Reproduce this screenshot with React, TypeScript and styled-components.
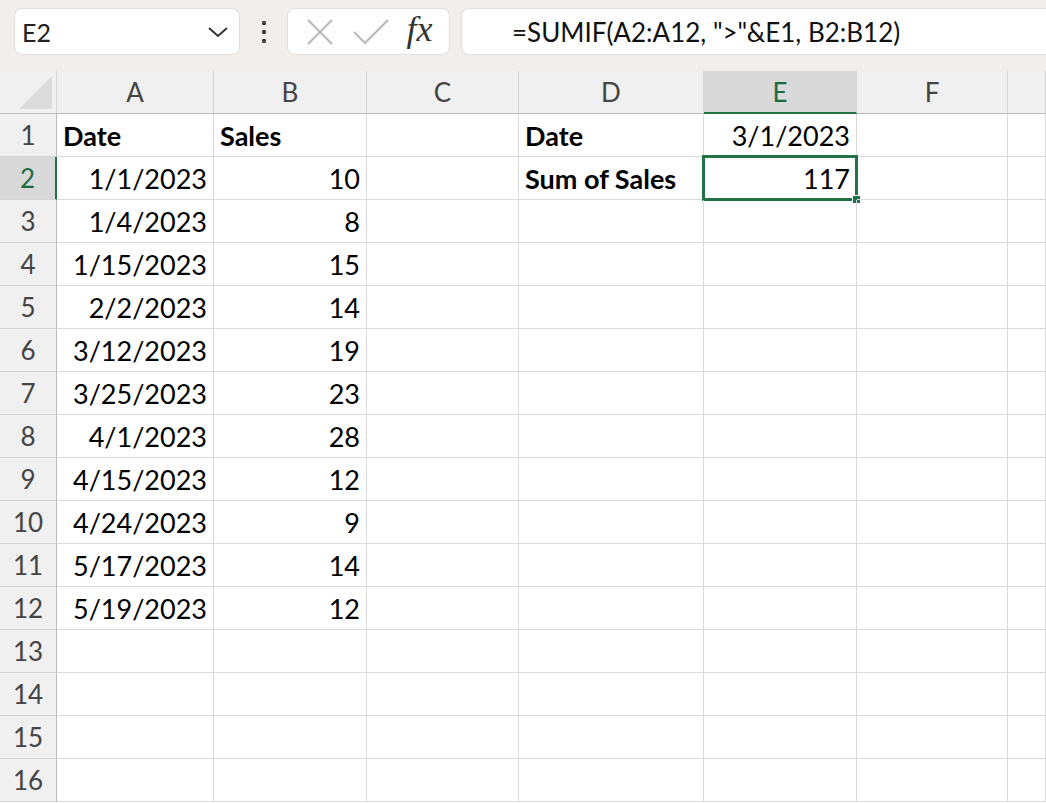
import React from "react";
import styled, { createGlobalStyle } from "styled-components";

const Global = createGlobalStyle`
  html, body { margin: 0; padding: 0; background: #fff; overflow: hidden; }
  body { font-family: "Lato", "Open Sans", sans-serif; }
`;

const Page = styled.div`width: 1046px; height: 803px; overflow: hidden;`;

const Toolbar = styled.div`
  height: 71px; background: #f1eeec; display: flex; align-items: center;
  padding: 0 0 0 14px; gap: 0; box-sizing: border-box; padding-bottom: 8px;
`;
const Box = styled.div<{ w?: number }>`
  height: 47px; background: #fff; border: 1px solid #e1dfdd; border-radius: 8px;
  box-sizing: border-box; display: flex; align-items: center;
  ${p => (p.w ? `width:${p.w}px;` : "flex:1;")}
`;
const NameBox = styled(Box)`padding: 0 10px 0 7px; justify-content: space-between; font-size: 25px; color: #222;`;
const Dots = styled.div`width: 47px; display: flex; flex-direction: column; align-items: center; gap: 5px;
  span { width: 4px; height: 4px; background: #444; border-radius: 1px; }`;
const IconBox = styled(Box)`justify-content: space-around; padding: 0 8px; margin-right: 11px;`;
const Fx = styled.span`font-family: "Liberation Serif", serif; font-style: italic; font-size: 36px; color: #333; margin-top: -6px;`;
const Formula = styled(Box)`border-radius: 8px 0 0 8px; border-right: none; padding-left: 50px; font-size: 26px; color: #111;`;

const Grid = styled.div`
  display: grid;
  grid-template-columns: 57px 157px 153px 152px 185px 153px 151px 1fr;
  grid-auto-rows: 43px;
  grid-template-rows: 43px;
`;
const Corner = styled.div`background: #f0f0f0; border-bottom: 1px solid #bcbcbc; border-right: 1px solid #d4d4d4; position: relative;
  &::after { content: ""; position: absolute; right: 4px; bottom: 4px; border-style: solid; border-width: 0 0 33px 33px; border-color: transparent transparent #dcdcdc transparent; }`;
const ColHead = styled.div<{ sel?: boolean }>`
  background: ${p => (p.sel ? "#d9d9d9" : "#f0f0f0")};
  border-right: 1px solid #d4d4d4; border-bottom: ${p => (p.sel ? "2px solid #217346" : "1px solid #bcbcbc")};
  color: ${p => (p.sel ? "#1e6b41" : "#444")}; font-size: 26px;
  display: flex; align-items: center; justify-content: center; box-sizing: border-box;
`;
const RowHead = styled.div<{ sel?: boolean }>`
  background: ${p => (p.sel ? "#d9d9d9" : "#f0f0f0")};
  border-right: ${p => (p.sel ? "2px solid #217346" : "1px solid #bcbcbc")};
  border-bottom: 1px solid #d4d4d4; box-sizing: border-box;
  color: ${p => (p.sel ? "#1e6b41" : "#444")}; font-size: 26px;
  display: flex; align-items: center; justify-content: center;
`;
const Cell = styled.div<{ bold?: boolean; right?: boolean }>`
  position: relative; box-sizing: border-box;
  border-right: 1px solid #dadada; border-bottom: 1px solid #dadada;
  display: flex; align-items: center; padding: 0 6px;
  justify-content: ${p => (p.right ? "flex-end" : "flex-start")};
  font-size: 27px; font-weight: ${p => (p.bold ? 700 : 400)}; color: #000;
  white-space: nowrap;
`;
const SelFrame = styled.div`
  position: absolute; left: -2px; top: -2px; right: -2px; bottom: -2px;
  border: 3px solid #217346;
  &::after { content: ""; position: absolute; right: -6px; bottom: -6px; width: 7px; height: 7px; background: #217346; border: 1px solid #fff; }
`;

const cols = ["A", "B", "C", "D", "E", "F", ""];
const data: [string, string][] = [
  ["1/1/2023", "10"], ["1/4/2023", "8"], ["1/15/2023", "15"], ["2/2/2023", "14"],
  ["3/12/2023", "19"], ["3/25/2023", "23"], ["4/1/2023", "28"], ["4/15/2023", "12"],
  ["4/24/2023", "9"], ["5/17/2023", "14"], ["5/19/2023", "12"],
];

export default function App() {
  const rows = [];
  for (let r = 1; r <= 16; r++) {
    const cells: React.ReactNode[] = [];
    const d = r >= 2 && r <= 12 ? data[r - 2] : null;
    cells.push(<RowHead key="h" sel={r === 2}>{r}</RowHead>);
    if (r === 1) {
      cells.push(<Cell key="a" bold>Date</Cell>, <Cell key="b" bold>Sales</Cell>);
    } else {
      cells.push(<Cell key="a" right>{d ? d[0] : ""}</Cell>, <Cell key="b" right>{d ? d[1] : ""}</Cell>);
    }
    cells.push(<Cell key="c" />);
    cells.push(<Cell key="d" bold>{r === 1 ? "Date" : r === 2 ? "Sum of Sales" : ""}</Cell>);
    cells.push(
      <Cell key="e" right>
        {r === 1 ? "3/1/2023" : r === 2 ? "117" : ""}
        {r === 2 && <SelFrame />}
      </Cell>
    );
    cells.push(<Cell key="f" />, <Cell key="g" />);
    rows.push(<React.Fragment key={r}>{cells}</React.Fragment>);
  }
  return (
    <Page>
      <Global />
      <Toolbar>
        <NameBox w={226}>
          <span>E2</span>
          <svg width="22" height="14" viewBox="0 0 22 14"><path d="M2 3 L11 11 L20 3" fill="none" stroke="#333" strokeWidth="2" /></svg>
        </NameBox>
        <Dots><span /><span /><span /></Dots>
        <IconBox w={163}>
          <svg width="30" height="30" viewBox="0 0 30 30"><path d="M3 3 L27 27 M27 3 L3 27" stroke="#bbb" strokeWidth="2.2" /></svg>
          <svg width="38" height="30" viewBox="0 0 38 30"><path d="M2 15 L13 26 L36 3" fill="none" stroke="#bbb" strokeWidth="2.2" /></svg>
          <Fx>fx</Fx>
        </IconBox>
        <Formula>=SUMIF(A2:A12, "&gt;"&amp;E1, B2:B12)</Formula>
      </Toolbar>
      <Grid>
        <Corner />
        {cols.map((c, i) => <ColHead key={i} sel={c === "E"}>{c}</ColHead>)}
        {rows}
      </Grid>
    </Page>
  );
}
